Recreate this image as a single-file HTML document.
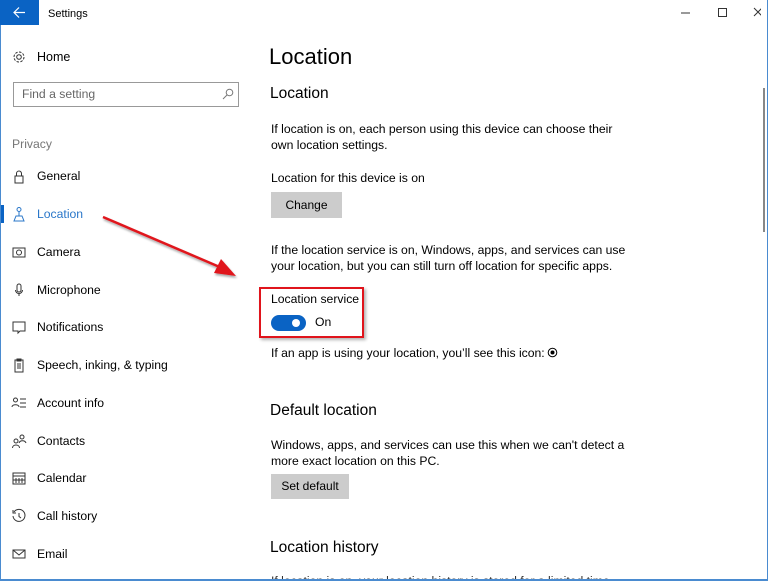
<!DOCTYPE html>
<html style="width:768px;height:581px;overflow:hidden"><head><style>
*{margin:0;padding:0;box-sizing:border-box}
html,body{overflow:hidden}
body{width:768px;height:581px;background:#fff;font-family:"Liberation Sans",sans-serif;color:#000;position:relative}
.frame{position:absolute;left:0;top:0;width:768px;height:581px;border:1px solid #4a8bd0;border-top:0}
.t{position:absolute;white-space:nowrap;font-size:12.2px;line-height:14px}
.nav{position:absolute;left:37px;font-size:12.2px;white-space:nowrap;transform:translateY(-7px)}
.ic{position:absolute;left:11px;width:16px;height:16px;transform:translateY(-8px)}
.btn{position:absolute;background:#ccc;font-size:12px;text-align:center}
</style></head><body>
<div style="position:absolute;left:271px;top:574px;width:420px;height:5px;overflow:hidden"><div class="t" style="left:0;top:0;color:#333">If location is on, your location history is stored for a limited time</div></div>
<div style="position:absolute;left:0;top:579px;width:768px;height:2px;background:#4a8bd0"></div>
<div class="frame"></div>
<div style="position:absolute;left:0;top:0;width:39px;height:25px;background:#0a63c4"></div>
<svg style="position:absolute;left:12px;top:6px" width="14" height="13" viewBox="0 0 14 13"><path d="M13 6.5H2M7 1.5L2 6.5L7 11.5" stroke="#fff" stroke-width="1.2" fill="none"/></svg>
<div class="t" style="left:48px;top:7px;font-size:11px">Settings</div>
<svg style="position:absolute;left:681px;top:6px" width="80" height="14"><path d="M0 7H9" stroke="#333"/><path d="M37.5 2.5h8v8h-8z" stroke="#333" fill="none"/><path d="M73 2L81 10M81 2L73 10" stroke="#333"/></svg>
<svg class="ic" style="top:57px" viewBox="0 0 16 16"><circle cx="8" cy="8" r="2.3" fill="none" stroke="#333"/><circle cx="8" cy="8" r="5" fill="none" stroke="#333" stroke-dasharray="2.5 1.4"/></svg>
<div class="nav" style="top:57px;font-size:12.5px">Home</div>
<div style="position:absolute;left:13px;top:82px;width:226px;height:25px;border:1px solid #999"></div>
<div class="t" style="left:22px;top:87px;color:#666">Find a setting</div>
<svg style="position:absolute;left:222px;top:88px" width="12" height="12"><circle cx="7.5" cy="4.5" r="3.3" fill="none" stroke="#777"/><path d="M5 7L1 11" stroke="#777"/></svg>
<div class="t" style="left:12px;top:137px;color:#777">Privacy</div>

<svg class="ic" style="top:176px" viewBox="0 0 16 16"><path d="M4 8h8v7H4z M5.5 8V5.5a2.5 2.5 0 0 1 5 0V8" fill="none" stroke="#333"/></svg>
<div class="nav" style="top:176px">General</div>
<div style="position:absolute;left:1px;top:205px;width:3px;height:18px;background:#0a63c4"></div>
<svg class="ic" style="top:214px" viewBox="0 0 16 16"><circle cx="8" cy="3.5" r="2" fill="none" stroke="#2a77c9"/><path d="M8 5.5V10M3 15l2-5h6l2 5z" fill="none" stroke="#2a77c9"/></svg>
<div class="nav" style="top:214px;color:#2a77c9">Location</div>
<svg class="ic" style="top:252px" viewBox="0 0 16 16"><path d="M2 4h12v9H2z" fill="none" stroke="#333"/><circle cx="8" cy="8.5" r="2.5" fill="none" stroke="#333"/></svg>
<div class="nav" style="top:252px">Camera</div>
<svg class="ic" style="top:290px" viewBox="0 0 16 16"><rect x="6" y="2" width="4" height="8" rx="2" fill="none" stroke="#333"/><path d="M4.5 8a3.5 3.5 0 0 0 7 0M8 11.5V14" fill="none" stroke="#333"/></svg>
<div class="nav" style="top:290px">Microphone</div>
<svg class="ic" style="top:327px" viewBox="0 0 16 16"><path d="M2 3h12v9H9l-2 2v-2H2z" fill="none" stroke="#333"/></svg>
<div class="nav" style="top:327px">Notifications</div>
<svg class="ic" style="top:365px" viewBox="0 0 16 16"><path d="M4 3h8v12H4z M6 2h4v2H6z M6 7h4M6 9h4M6 11h4" fill="none" stroke="#333"/></svg>
<div class="nav" style="top:365px">Speech, inking, &amp; typing</div>
<svg class="ic" style="top:403px" viewBox="0 0 16 16"><circle cx="4.5" cy="5" r="2" fill="none" stroke="#333"/><path d="M1 12c0-3 7-3 7 0M9 4h6M9 8h6M9 12h6" fill="none" stroke="#333"/></svg>
<div class="nav" style="top:403px">Account info</div>
<svg class="ic" style="top:441px" viewBox="0 0 16 16"><circle cx="5" cy="8" r="2" fill="none" stroke="#333"/><circle cx="11" cy="4" r="2" fill="none" stroke="#333"/><path d="M1.5 15c0-4 7-4 7 0M8 10c1-3 6-3 7 0" fill="none" stroke="#333"/></svg>
<div class="nav" style="top:441px">Contacts</div>
<svg class="ic" style="top:478px" viewBox="0 0 16 16"><path d="M2 3h12v11H2z M2 6h12 M5 8v5M8 8v5M11 8v5M2 10h12" fill="none" stroke="#333"/></svg>
<div class="nav" style="top:478px">Calendar</div>
<svg class="ic" style="top:516px" viewBox="0 0 16 16"><path d="M3 4a6 6 0 1 1-1 4M2 2v3h3M8 5v3.5l2 1.5" fill="none" stroke="#333"/></svg>
<div class="nav" style="top:516px">Call history</div>
<svg class="ic" style="top:554px" viewBox="0 0 16 16"><path d="M2 4h12v8H2z M2 4l6 5 6-5" fill="none" stroke="#333"/></svg>
<div class="nav" style="top:554px">Email</div>

<div class="t" style="left:269px;top:44px;font-size:22px;line-height:26px">Location</div>
<div class="t" style="left:270px;top:85px;font-size:15.5px;line-height:18px">Location</div>
<div class="t" style="left:271px;top:122px;line-height:15.5px">If location is on, each person using this device can choose their<br>own location settings.</div>
<div class="t" style="left:271px;top:171px">Location for this device is on</div>
<div class="btn" style="left:271px;top:192px;width:71px;height:26px;line-height:26px">Change</div>
<div class="t" style="left:271px;top:242px;line-height:16px">If the location service is on, Windows, apps, and services can use<br>your location, but you can still turn off location for specific apps.</div>
<div style="position:absolute;left:259px;top:287px;width:105px;height:51px;border:2px solid #e0141c;box-shadow:2px 2px 3px rgba(0,0,0,.3)"></div>
<div class="t" style="left:271px;top:292px">Location service</div>
<div style="position:absolute;left:271px;top:315px;width:35px;height:16px;border-radius:8px;background:#0a63c4"></div>
<div style="position:absolute;left:292px;top:319px;width:8px;height:8px;border-radius:50%;background:#fff"></div>
<div class="t" style="left:315px;top:315px">On</div>
<div class="t" style="left:271px;top:346px">If an app is using your location, you’ll see this icon: </div>
<svg style="position:absolute;left:547px;top:347px" width="11" height="11"><circle cx="5.5" cy="5.5" r="4.3" fill="none" stroke="#000"/><circle cx="5.5" cy="5.5" r="2" fill="#000"/></svg>
<div class="t" style="left:270px;top:402px;font-size:15.5px;line-height:18px">Default location</div>
<div class="t" style="left:271px;top:437px;line-height:16px">Windows, apps, and services can use this when we can't detect a<br>more exact location on this PC.</div>
<div class="btn" style="left:271px;top:474px;width:78px;height:25px;line-height:25px">Set default</div>
<div class="t" style="left:270px;top:539px;font-size:15.5px;line-height:18px">Location history</div>
<div style="position:absolute;left:763px;top:88px;width:2px;height:144px;background:#888"></div>
<svg style="position:absolute;left:0;top:0" width="768" height="581"><defs><filter id="s"><feDropShadow dx="1" dy="2" stdDeviation="1" flood-opacity=".35"/></filter></defs><g filter="url(#s)"><path d="M103 217L222 268" stroke="#e0141c" stroke-width="2.5"/><path d="M236 276L214 273L221 259z" fill="#e0141c"/></g></svg>
</body></html>
